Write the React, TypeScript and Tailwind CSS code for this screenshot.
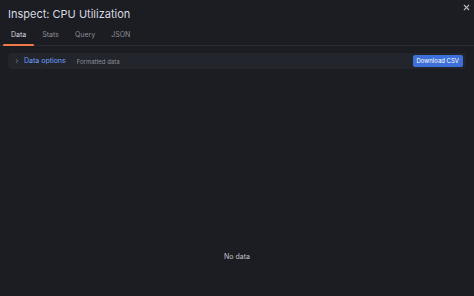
import { X, ChevronRight } from 'lucide-react';

const TABS = ['Data', 'Stats', 'Query', 'JSON'];

export default function App() {
  return (
    <div
      className="flex h-[296px] w-[474px] flex-col bg-[#1b1d23] text-[#ccccdc]"
      style={{ fontFamily: 'Inter, "Liberation Sans", sans-serif' }}
    >
      <div className="relative pt-[6px]">
        <h1 className="pl-2 text-[11px] leading-[16px] text-[#d8d9e0]">Inspect: CPU Utilization</h1>
        <button className="absolute right-[3px] top-[3px] text-[#b8b9c0]">
          <X size={9} strokeWidth={3} />
        </button>
        <div className="mt-[8px] flex border-b border-[#2a2c33] pl-[3px]">
          {TABS.map((tab, i) => (
            <div
              key={tab}
              className={`relative px-[8px] pb-[5px] text-[7px] leading-[10px] ${
                i === 0 ? 'text-[#d8d9e0]' : 'text-[#8e8f97]'
              }`}
            >
              {tab}
              {i === 0 && (
                <div className="absolute bottom-[-1px] left-0 right-0 h-[2px] rounded-sm bg-[#f0794a]" />
              )}
            </div>
          ))}
        </div>
      </div>

      <div className="ml-2 mr-[8px] mt-[7px] flex h-[16px] items-center rounded-sm bg-[#22252b] pl-[6px] pr-[3px]">
        <ChevronRight size={6} strokeWidth={3} className="text-[#8e8f97]" />
        <span className="ml-[4px] text-[7px] text-[#6e9fff]">Data options</span>
        <span className="ml-[11px] text-[6px] text-[#8e8f97]">Formatted data</span>
        <button className="ml-auto h-[12px] rounded-[2px] bg-[#3d71d9] px-[4px] text-[6px] leading-[12px] text-white">
          Download CSV
        </button>
      </div>

      <div className="flex flex-1 items-center justify-center pt-[160px] pb-[10px]">
        <span className="text-[7px] text-[#c0c1c8]">No data</span>
      </div>
    </div>
  );
}
